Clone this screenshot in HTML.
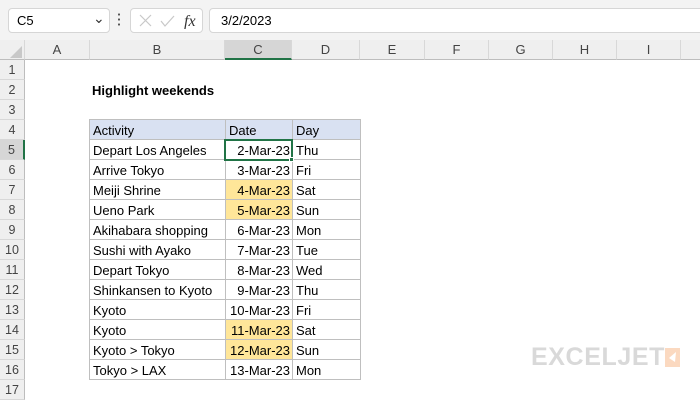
<!DOCTYPE html>
<html><head><style>
*{margin:0;padding:0;box-sizing:border-box}
body{width:700px;height:400px;overflow:hidden;background:#fff;font-family:"Liberation Sans",sans-serif;position:relative;font-size:13px;color:#000}
.a{position:absolute}
.top{left:0;top:0;width:700px;height:40px;background:#f3f3f3}
.box{background:#fff;border:1px solid #d6d6d6;border-radius:4px;height:25px;top:8px}
.ch{top:40px;height:20px;background:#efefef;border-bottom:1px solid #bdbdbd;border-right:1px solid #d8d8d8;text-align:center;line-height:20px;color:#444;font-size:13px}
.rh{left:0;width:25px;height:20px;background:#efefef;border-bottom:1px solid #d8d8d8;border-right:1px solid #bdbdbd;text-align:center;line-height:21px;color:#444;font-size:12.5px}
.c{height:20px;line-height:21px;border-right:1px solid #bfbfbf;border-bottom:1px solid #bfbfbf;padding-left:3px;white-space:nowrap;overflow:hidden}
.r{text-align:right;padding-right:2px;padding-left:0}
.y{background:#ffe699}
.h{background:#d9e1f2}
</style></head><body>
<div class="a top"></div>
<div class="a box" style="left:8px;width:102px"><span class="a" style="left:8px;top:4px;font-size:13px">C5</span><span class="a" style="left:84px;top:1px;font-size:14px;color:#333">&#8964;</span></div>
<div class="a" style="left:118px;top:12px;width:2px;height:14px;background:radial-gradient(circle,#555 1px,transparent 1.2px) 0 0/2px 5px"></div>
<div class="a box" style="left:130px;width:73px">
<svg class="a" style="left:5px;top:4px" width="65" height="16"><path d="M4 2l11 11M15 2L4 13" stroke="#c8c8c8" stroke-width="1.2" fill="none"/><path d="M25 8l4 5 9-10" stroke="#c8c8c8" stroke-width="1.2" fill="none"/><text x="48" y="13" font-family="Liberation Serif" font-style="italic" font-size="16" fill="#333">fx</text></svg></div>
<div class="a box" style="left:209px;width:500px"><span class="a" style="left:11px;top:4px">3/2/2023</span></div>

<div class="a ch" style="left:0;width:25px"><svg class="a" style="left:10px;top:6px" width="12" height="12"><path d="M12 0V12H0Z" fill="#c8c8c8"/></svg></div>
<div class="a ch" style="left:25px;width:65px">A</div>
<div class="a ch" style="left:90px;width:135px">B</div>
<div class="a ch" style="left:225px;width:67px;background:#d6d6d6;border-bottom:2px solid #217346">C</div>
<div class="a ch" style="left:292px;width:68px">D</div>
<div class="a ch" style="left:360px;width:65px">E</div>
<div class="a ch" style="left:425px;width:64px">F</div>
<div class="a ch" style="left:489px;width:64px">G</div>
<div class="a ch" style="left:553px;width:64px">H</div>
<div class="a ch" style="left:617px;width:64px">I</div>
<div class="a ch" style="left:681px;width:30px"></div>

<div class="a rh" style="top:60px">1</div>
<div class="a rh" style="top:80px">2</div>
<div class="a rh" style="top:100px">3</div>
<div class="a rh" style="top:120px">4</div>
<div class="a rh" style="top:140px;background:#d6d6d6;border-right:2px solid #217346">5</div>
<div class="a rh" style="top:160px">6</div>
<div class="a rh" style="top:180px">7</div>
<div class="a rh" style="top:200px">8</div>
<div class="a rh" style="top:220px">9</div>
<div class="a rh" style="top:240px">10</div>
<div class="a rh" style="top:260px">11</div>
<div class="a rh" style="top:280px">12</div>
<div class="a rh" style="top:300px">13</div>
<div class="a rh" style="top:320px">14</div>
<div class="a rh" style="top:340px">15</div>
<div class="a rh" style="top:360px">16</div>
<div class="a rh" style="top:380px">17</div>

<div class="a" style="left:92px;top:83px;font-weight:bold;font-size:13px">Highlight weekends</div>

<div class="a" style="left:89px;top:119px;width:272px;border-left:1px solid #bfbfbf;border-top:1px solid #bfbfbf">
<div style="display:grid;grid-template-columns:136px 67px 68px">
<div class="c h">Activity</div><div class="c h">Date</div><div class="c h">Day</div>
<div class="c">Depart Los Angeles</div><div class="c r">2-Mar-23</div><div class="c">Thu</div>
<div class="c">Arrive Tokyo</div><div class="c r">3-Mar-23</div><div class="c">Fri</div>
<div class="c">Meiji Shrine</div><div class="c r y">4-Mar-23</div><div class="c">Sat</div>
<div class="c">Ueno Park</div><div class="c r y">5-Mar-23</div><div class="c">Sun</div>
<div class="c">Akihabara shopping</div><div class="c r">6-Mar-23</div><div class="c">Mon</div>
<div class="c">Sushi with Ayako</div><div class="c r">7-Mar-23</div><div class="c">Tue</div>
<div class="c">Depart Tokyo</div><div class="c r">8-Mar-23</div><div class="c">Wed</div>
<div class="c">Shinkansen to Kyoto</div><div class="c r">9-Mar-23</div><div class="c">Thu</div>
<div class="c">Kyoto</div><div class="c r">10-Mar-23</div><div class="c">Fri</div>
<div class="c">Kyoto</div><div class="c r y">11-Mar-23</div><div class="c">Sat</div>
<div class="c">Kyoto &gt; Tokyo</div><div class="c r y">12-Mar-23</div><div class="c">Sun</div>
<div class="c">Tokyo &gt; LAX</div><div class="c r">13-Mar-23</div><div class="c">Mon</div>
</div></div>
<div class="a" style="left:224px;top:139px;width:69px;height:22px;border:2px solid #217346"></div>
<div class="a" style="left:289px;top:157px;width:5px;height:5px;background:#217346;border:1px solid #fff"></div>

<div class="a" style="left:531px;top:343px;font-size:25px;font-weight:bold;color:#d9d9d9;letter-spacing:0.6px;font-family:'Liberation Sans',sans-serif">EXCELJET</div>
<div class="a" style="left:665px;top:348px;width:15px;height:19px;background:#fbd9c0"><svg width="15" height="19"><path d="M11 4L4 10l6 4z" fill="#fff"/></svg></div>
</body></html>
